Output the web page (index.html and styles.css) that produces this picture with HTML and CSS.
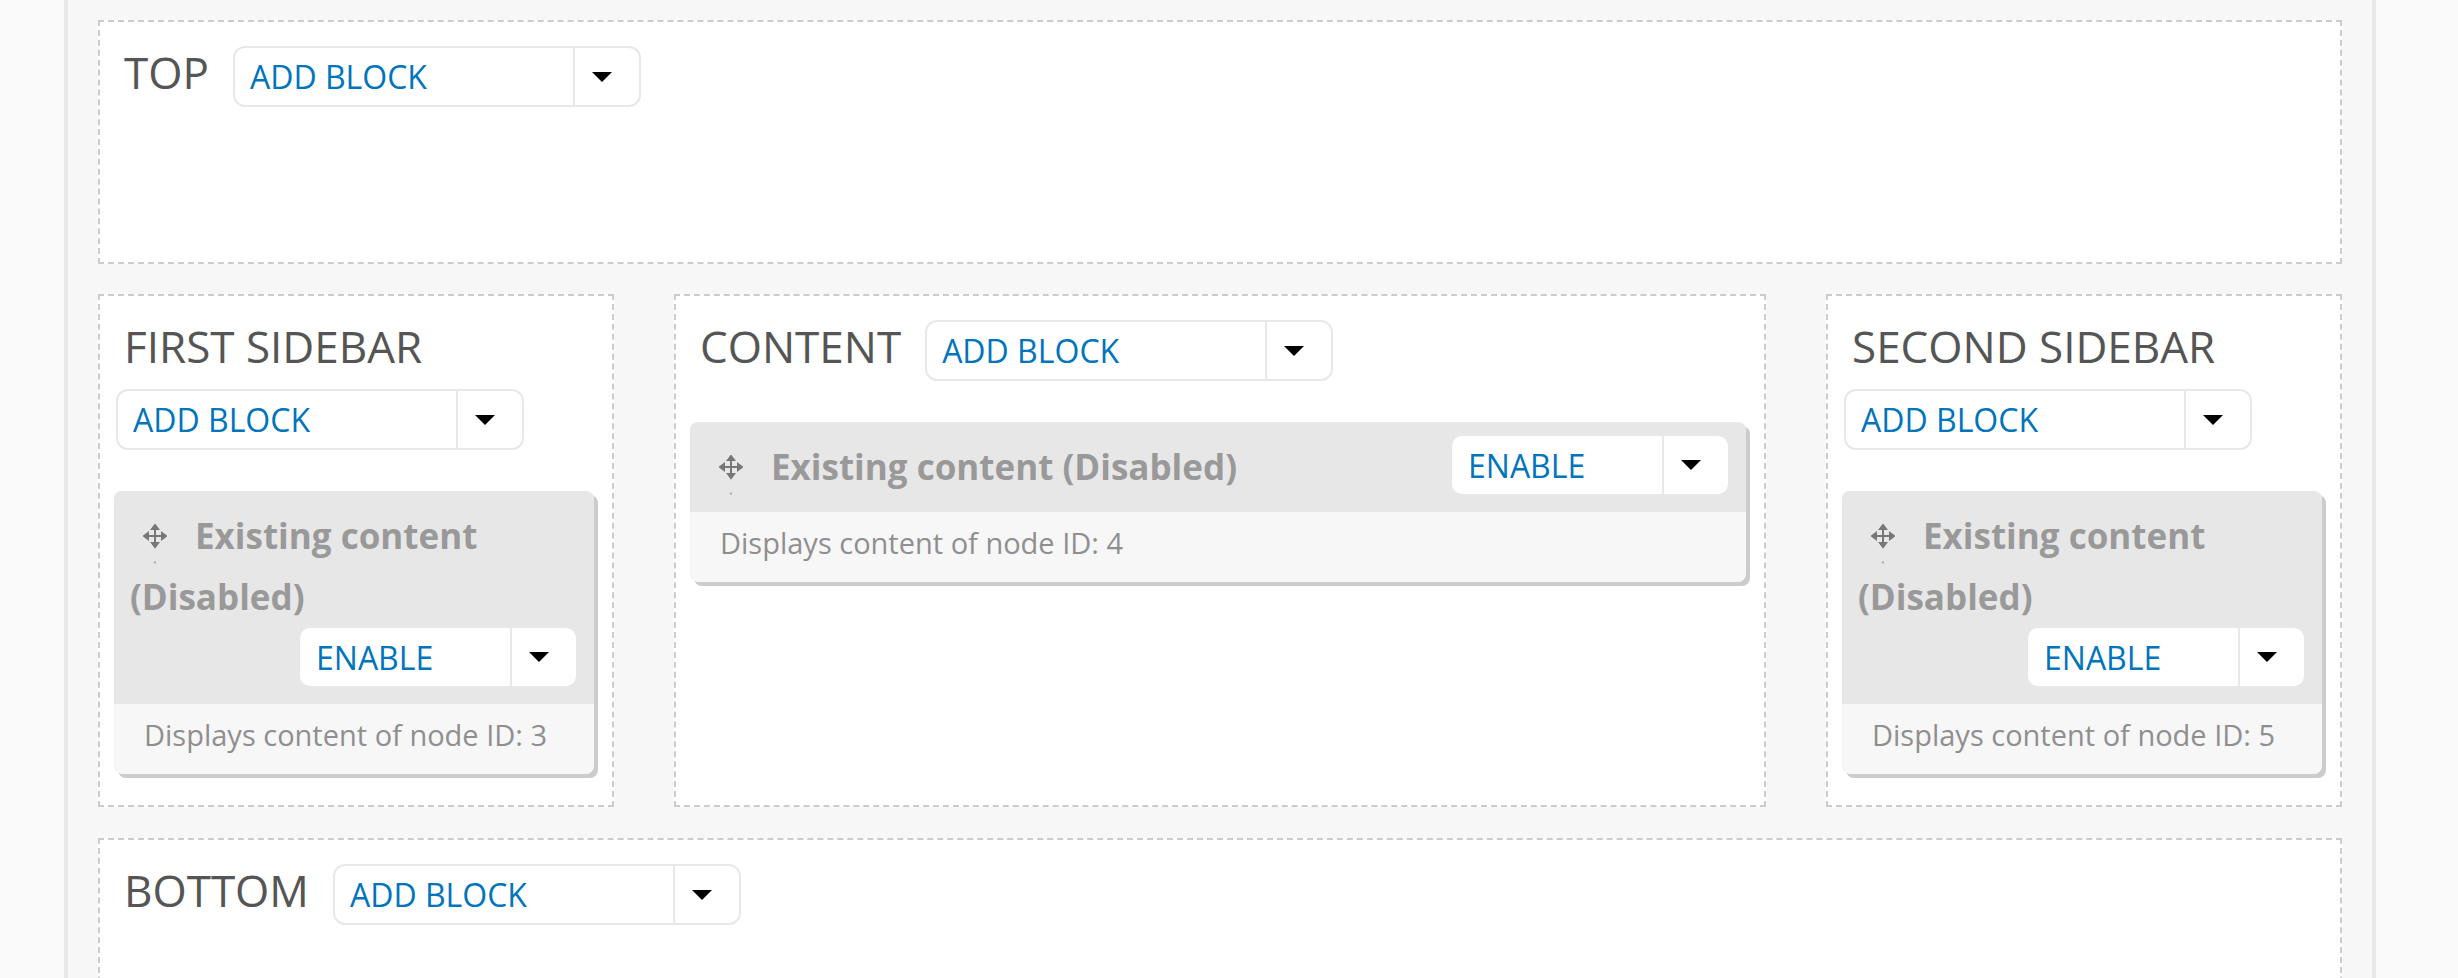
FILE: index.html
```html
<!DOCTYPE html>
<html lang="en">
<head>
    <meta charset="UTF-8">
    <meta name="viewport" content="width=device-width, initial-scale=1.0">
    <title>Block layout</title>
    <link rel="stylesheet" href="styles.css">
</head>
<body>

    <div class="layout-panel">
        <!-- Top -->
        <div class="region region-full">
            <h2 class="region-title">TOP</h2>
            <div class="dropbutton add-block">
                <a class="dropbutton-action">ADD BLOCK</a>
                <span class="dropbutton-toggle"><i class="arrow"></i></span>
            </div>
        </div>

        <!-- Three columns -->
        <div class="region-columns">
            <div class="region">
                <h2 class="region-title">FIRST SIDEBAR</h2>
                <div class="dropbutton add-block">
                    <a class="dropbutton-action">ADD BLOCK</a>
                    <span class="dropbutton-toggle"><i class="arrow"></i></span>
                </div>
                <div class="block-card">
                    <div class="block-header">
                        <h3 class="block-title">
                            <svg class="drag-icon" viewBox="0 0 24 40"><path d="M12 2v20M2 12h20M9 5l3-4 3 4zM9 19l3 4 3-4zM5 9l-4 3 4 3zM19 9l4 3-4 3z"/><path class="drag-dot" d="M11 38.5h2"/></svg>Existing content (Disabled)
                        </h3>
                        <div class="dropbutton enable">
                            <a class="dropbutton-action">ENABLE</a>
                            <span class="dropbutton-toggle"><i class="arrow"></i></span>
                        </div>
                    </div>
                    <div class="block-body">Displays content of node ID: 3</div>
                </div>
            </div>

            <div class="region">
                <h2 class="region-title">CONTENT</h2>
                <div class="dropbutton add-block">
                    <a class="dropbutton-action">ADD BLOCK</a>
                    <span class="dropbutton-toggle"><i class="arrow"></i></span>
                </div>
                <div class="block-card">
                    <div class="block-header">
                        <h3 class="block-title">
                            <svg class="drag-icon" viewBox="0 0 24 40"><path d="M12 2v20M2 12h20M9 5l3-4 3 4zM9 19l3 4 3-4zM5 9l-4 3 4 3zM19 9l4 3-4 3z"/><path class="drag-dot" d="M11 38.5h2"/></svg>Existing content (Disabled)
                        </h3>
                        <div class="dropbutton enable">
                            <a class="dropbutton-action">ENABLE</a>
                            <span class="dropbutton-toggle"><i class="arrow"></i></span>
                        </div>
                    </div>
                    <div class="block-body">Displays content of node ID: 4</div>
                </div>
            </div>

            <div class="region">
                <h2 class="region-title">SECOND SIDEBAR</h2>
                <div class="dropbutton add-block">
                    <a class="dropbutton-action">ADD BLOCK</a>
                    <span class="dropbutton-toggle"><i class="arrow"></i></span>
                </div>
                <div class="block-card">
                    <div class="block-header">
                        <h3 class="block-title">
                            <svg class="drag-icon" viewBox="0 0 24 40"><path d="M12 2v20M2 12h20M9 5l3-4 3 4zM9 19l3 4 3-4zM5 9l-4 3 4 3zM19 9l4 3-4 3z"/><path class="drag-dot" d="M11 38.5h2"/></svg>Existing content (Disabled)
                        </h3>
                        <div class="dropbutton enable">
                            <a class="dropbutton-action">ENABLE</a>
                            <span class="dropbutton-toggle"><i class="arrow"></i></span>
                        </div>
                    </div>
                    <div class="block-body">Displays content of node ID: 5</div>
                </div>
            </div>
        </div>

        <!-- Bottom -->
        <div class="region region-full">
            <h2 class="region-title">BOTTOM</h2>
            <div class="dropbutton add-block">
                <a class="dropbutton-action">ADD BLOCK</a>
                <span class="dropbutton-toggle"><i class="arrow"></i></span>
            </div>
        </div>
    </div>

</body>
</html>
```

FILE: styles.css
```css
html, body {
    height: 978px;
    overflow: hidden;
}

body {
    font-family: "Open Sans", Arial, sans-serif;
    background-color: #fafafa;
    color: #555;
    margin: 0;
    padding: 0;
}

.layout-panel {
    margin: 0 82px 0 64px;
    padding: 20px 30px;
    min-height: 958px;
    background-color: #f7f7f7;
    border-left: 4px solid #e8e8e8;
    border-right: 4px solid #e8e8e8;
}

.region {
    display: flex;
    flex-wrap: wrap;
    align-items: flex-start;
    align-content: flex-start;
    row-gap: 17px;
    background-color: white;
    border: 2px dashed #ccc;
    padding: 24px 18px 31px 14px;
    box-sizing: border-box;
}

.region-full {
    min-height: 244px;
}

.region-columns {
    display: grid;
    grid-template-columns: 516px 1fr 516px;
    column-gap: 60px;
    margin: 30px 0 31px;
}

.region-title {
    font-size: 44px;
    font-weight: 400;
    line-height: 52px;
    color: #555;
    margin: 0 22px 0 10px;
}

.dropbutton {
    display: flex;
    height: 61px;
    box-sizing: border-box;
    background-color: white;
    border: 2px solid #e8e8e8;
    border-radius: 12px;
    margin-left: 2px;
}

.dropbutton-action {
    flex: 1;
    padding-left: 15px;
    color: #0074bd;
    font-size: 32px;
    line-height: 57px;
}

.dropbutton-toggle {
    display: flex;
    align-items: center;
    width: 66px;
    padding-left: 17px;
    box-sizing: border-box;
    border-left: 2px solid #e8e8e8;
}

.arrow {
    width: 0;
    height: 0;
    border-left: 10.5px solid transparent;
    border-right: 10.5px solid transparent;
    border-top: 10px solid black;
}

.add-block {
    width: 408px;
}

.enable {
    width: 280px;
    height: 62px;
    margin: -2px 0 2px auto;
}

.enable .dropbutton-action {
    padding-left: 16px;
    line-height: 59px;
}

.block-card {
    width: 100%;
    margin-top: 24px;
    border-radius: 8px;
    box-shadow: 4px 4px 0 #ccc;
    overflow: hidden;
    background-color: #f7f7f7;
}

.block-header {
    display: flex;
    flex-wrap: wrap;
    align-items: flex-start;
    justify-content: space-between;
    row-gap: 1px;
    padding: 14px 16px 14px 16px;
    background-color: #e7e7e7;
}

.block-title {
    font-size: 35px;
    font-weight: 700;
    line-height: 61px;
    color: #999;
    margin: 0;
}

.drag-icon {
    width: 24px;
    height: 40px;
    margin: 0 28px 0 13px;
    vertical-align: -15px;
    filter: blur(0.7px);
}

.drag-icon path {
    fill: #777;
    stroke: #777;
    stroke-width: 2;
}

.drag-icon .drag-dot {
    stroke: #aaa;
}

.block-body {
    padding: 10px 30px 0;
    height: 60px;
    font-size: 29px;
    line-height: 42px;
    color: #8f8f8f;
}
```
